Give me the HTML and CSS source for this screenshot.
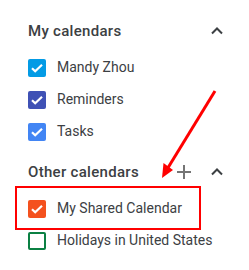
FILE: index.html
```html
<!DOCTYPE html>
<html>
<head>
<meta charset="utf-8">
<link rel="stylesheet" href="styles.css">
</head>
<body>
<div class="sidebar">
  <section class="group">
    <div class="group-head">
      <span class="group-title">My calendars</span>
      <span class="head-actions">
        <svg class="chev" width="24" height="24" viewBox="0 0 24 24"><path d="M7 14.5l5-5 5 5" fill="none" stroke="#3c4043" stroke-width="2"/></svg>
      </span>
    </div>
    <ul class="cal-list">
      <li class="cal"><span class="box filled" style="background:#039be5"><svg viewBox="0 0 18 18"><path d="M4 9.2l3.2 3.1L14 5.8" fill="none" stroke="#fff" stroke-width="2.2"/></svg></span><span class="name">Mandy Zhou</span></li>
      <li class="cal"><span class="box filled" style="background:#3f51b5"><svg viewBox="0 0 18 18"><path d="M4 9.2l3.2 3.1L14 5.8" fill="none" stroke="#fff" stroke-width="2.2"/></svg></span><span class="name">Reminders</span></li>
      <li class="cal"><span class="box filled" style="background:#4285f4"><svg viewBox="0 0 18 18"><path d="M4 9.2l3.2 3.1L14 5.8" fill="none" stroke="#fff" stroke-width="2.2"/></svg></span><span class="name">Tasks</span></li>
    </ul>
  </section>
  <section class="group second">
    <div class="group-head">
      <span class="group-title">Other calendars</span>
      <span class="head-actions">
        <svg class="plus" width="24" height="24" viewBox="0 0 24 24"><path d="M12 5v14M5 12h14" fill="none" stroke="#757575" stroke-width="2"/></svg>
        <svg class="chev" width="24" height="24" viewBox="0 0 24 24"><path d="M7 14.5l5-5 5 5" fill="none" stroke="#3c4043" stroke-width="2"/></svg>
      </span>
    </div>
    <ul class="cal-list">
      <li class="cal highlighted"><span class="box filled" style="background:#f4511e"><svg viewBox="0 0 18 18"><path d="M4 9.2l3.2 3.1L14 5.8" fill="none" stroke="#fff" stroke-width="2.2"/></svg></span><span class="name">My Shared Calendar</span></li>
      <li class="cal"><span class="box outline" style="border-color:#0b8043"></span><span class="name">Holidays in United States</span></li>
    </ul>
  </section>
  <svg class="annot" width="249" height="270" viewBox="0 0 249 270">
    <line x1="215" y1="91" x2="166" y2="171" stroke="#ff0000" stroke-width="3"/>
    <polygon points="162,178 163.5,163 173,170" fill="#ff0000"/>
  </svg>
</div>
</body>
</html>
```
FILE: styles.css
```css
html, body {
  margin: 0;
  padding: 0;
  background: #ffffff;
}
body {
  font-family: Roboto, "Liberation Sans", Arial, sans-serif;
  color: #3c4043;
}
.sidebar {
  position: relative;
  width: 249px;
  height: 270px;
  padding-top: 10px;
  box-sizing: border-box;
}
.group-head {
  display: flex;
  align-items: center;
  justify-content: space-between;
  height: 42px;
  padding-left: 28px;
  padding-right: 20px;
}
.group-title {
  font-size: 15px;
  font-weight: 500;
  letter-spacing: 0.3px;
  color: #3c4043;
}
.head-actions {
  display: flex;
  align-items: center;
  gap: 9px;
}
.second {
  margin-top: 3px;
}
.cal-list {
  list-style: none;
  margin: 0;
  padding: 0;
}
.cal {
  position: relative;
  display: flex;
  align-items: center;
  height: 32px;
  padding-left: 28px;
  gap: 11px;
}
.box {
  width: 18px;
  height: 18px;
  border-radius: 2px;
  box-sizing: border-box;
  flex: none;
  display: block;
}
.box svg {
  display: block;
  width: 18px;
  height: 18px;
}
.box.outline {
  border: 2px solid #0b8043;
}
.name {
  font-size: 14px;
  color: #3c4043;
  margin-top: -2px;
}
.highlighted::after {
  content: "";
  position: absolute;
  left: 15px;
  top: -7px;
  width: 186px;
  height: 44px;
  border: 2px solid #ff0000;
  box-sizing: border-box;
}
.annot {
  position: absolute;
  left: 0;
  top: 0;
  pointer-events: none;
}
```
